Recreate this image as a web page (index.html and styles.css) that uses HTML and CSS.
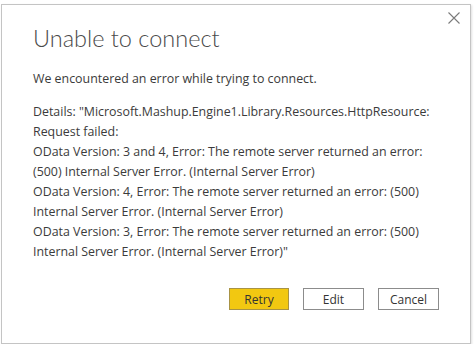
FILE: index.html
```html
<!DOCTYPE html>
<html lang="en">
<head>
    <meta charset="UTF-8">
    <title>Unable to connect</title>
    <link rel="stylesheet" href="styles.css">
</head>
<body>
    <div class="dialog">
        <svg class="close" width="12" height="12" viewBox="0 0 12 12">
            <path d="M0.5 0.5 L11.5 11.5 M11.5 0.5 L0.5 11.5" stroke="#7a7a7a" stroke-width="1.1" fill="none"/>
        </svg>
        <h1 class="title">Unable to connect</h1>
        <p class="intro">We encountered an error while trying to connect.</p>
        <div class="details">
            <p>Details: "Microsoft.Mashup.Engine1.Library.Resources.HttpResource:</p>
            <p>Request failed:</p>
            <p>OData Version: 3 and 4, Error: The remote server returned an error:</p>
            <p>(500) Internal Server Error. (Internal Server Error)</p>
            <p>OData Version: 4, Error: The remote server returned an error: (500)</p>
            <p>Internal Server Error. (Internal Server Error)</p>
            <p>OData Version: 3, Error: The remote server returned an error: (500)</p>
            <p>Internal Server Error. (Internal Server Error)"</p>
        </div>
        <div class="buttons">
            <button class="btn primary">Retry</button>
            <button class="btn">Edit</button>
            <button class="btn">Cancel</button>
        </div>
    </div>
</body>
</html>
```

FILE: styles.css
```css
body {
    margin: 0;
    background: #ffffff;
    font-family: "Open Sans", "Noto Sans", sans-serif;
    color: #3b3b3b;
}
.dialog {
    position: relative;
    margin: 4px 0 0 1px;
    width: 470px;
    height: 340px;
    box-sizing: border-box;
    border: 1px solid #c4c4c4;
    box-shadow: 1px 1px 2px rgba(0, 0, 0, 0.12);
    padding: 19px 31px 0 31px;
    background: #ffffff;
}
.close {
    position: absolute;
    top: 7px;
    right: 10px;
}
.title {
    margin: 0;
    font-family: "Lato", "Open Sans", sans-serif;
    font-weight: 300;
    font-size: 23.5px;
    line-height: 28px;
    color: #4a4a4a;
}
.intro {
    margin: 17px 0 0 0;
    font-size: 12.4px;
    line-height: 20px;
}
.details {
    margin-top: 13px;
    font-size: 12.4px;
    line-height: 20px;
}
.details p {
    margin: 0;
    white-space: nowrap;
}
.buttons {
    display: flex;
    justify-content: flex-end;
    gap: 14px;
    margin-top: 26px;
}
.btn {
    width: 61px;
    height: 22px;
    box-sizing: border-box;
    border: 1px solid #8c8c8c;
    background: #ffffff;
    font-family: "Open Sans", sans-serif;
    font-size: 12px;
    color: #333333;
    padding: 0;
}
.btn.primary {
    width: 60px;
    background: #f2c811;
    border-color: #a89345;
}
```
